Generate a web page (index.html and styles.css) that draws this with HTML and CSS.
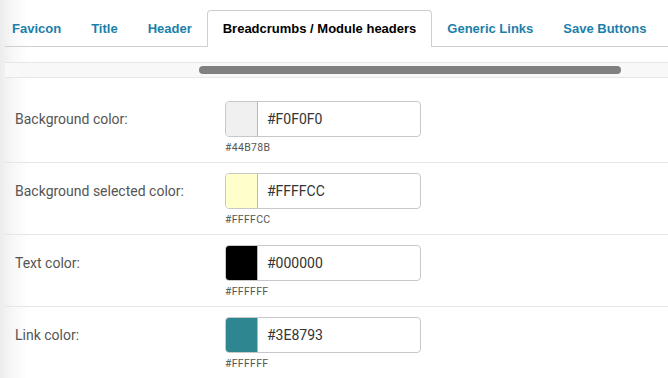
FILE: index.html
```html
<!DOCTYPE html>
<html>
<head>
<meta charset="utf-8">
<link rel="stylesheet" href="styles.css">
</head>
<body>
<div class="page">
  <div class="tabs">
    <div class="tab first">Favicon</div>
    <div class="tab">Title</div>
    <div class="tab">Header</div>
    <div class="tab active">Breadcrumbs / Module headers</div>
    <div class="tab">Generic Links</div>
    <div class="tab">Save Buttons</div>
  </div>
  <div class="track"><div class="thumb"></div></div>
  <div class="rows">
    <div class="row">
      <div class="label">Background color:</div>
      <div class="field">
        <div class="input"><span class="swatch" style="background:#F0F0F0"></span><span class="value">#F0F0F0</span></div>
        <div class="hint">#44B78B</div>
      </div>
    </div>
    <div class="row">
      <div class="label">Background selected color:</div>
      <div class="field">
        <div class="input"><span class="swatch" style="background:#FFFFCC"></span><span class="value">#FFFFCC</span></div>
        <div class="hint">#FFFFCC</div>
      </div>
    </div>
    <div class="row">
      <div class="label">Text color:</div>
      <div class="field">
        <div class="input"><span class="swatch" style="background:#000000"></span><span class="value">#000000</span></div>
        <div class="hint">#FFFFFF</div>
      </div>
    </div>
    <div class="row">
      <div class="label">Link color:</div>
      <div class="field">
        <div class="input"><span class="swatch" style="background:#2E8690"></span><span class="value">#3E8793</span></div>
        <div class="hint">#FFFFFF</div>
      </div>
    </div>
  </div>
</div>
</body>
</html>
```
FILE: styles.css
```css
html, body {
  margin: 0;
  padding: 0;
  background: #fff;
}
.page {
  width: 668px;
  height: 378px;
  overflow: hidden;
  padding-left: 5px;
  box-sizing: border-box;
  background: linear-gradient(to right, #ececec 0, #f7f7f7 12px, #ffffff 28px);
  font-family: Roboto, "Liberation Sans", sans-serif;
}
.tabs {
  display: flex;
  align-items: flex-end;
  height: 46px;
  border-bottom: 1px solid #cfcfcf;
  white-space: nowrap;
}
.tab {
  box-sizing: border-box;
  height: 37px;
  padding: 0 14px;
  border: 1px solid transparent;
  border-bottom: none;
  margin-bottom: -1px;
  font-family: "Liberation Sans", Arial, sans-serif;
  font-weight: bold;
  font-size: 13px;
  line-height: 35px;
  color: #1a80aa;
}
.tab.first {
  padding-left: 6px;
}
.tab.active {
  padding: 0 15px;
  border-color: #cfcfcf;
  border-radius: 4px 4px 0 0;
  background: #fff;
  color: #000;
}
.track {
  margin-top: 15px;
  height: 14px;
  border-top: 1px solid #e6e6e6;
  border-bottom: 1px solid #e6e6e6;
  background: #f8f8f8;
  position: relative;
}
.thumb {
  position: absolute;
  left: 194px;
  top: 3px;
  width: 422px;
  height: 8px;
  border-radius: 4px;
  background: #808080;
}
.rows {
  margin-top: 13px;
}
.row {
  display: flex;
  padding: 10px 0 6px;
  border-bottom: 1px solid #e6e6e6;
}
.label {
  width: 220px;
  padding-left: 10px;
  box-sizing: border-box;
  height: 36px;
  line-height: 36px;
  font-size: 14px;
  color: #555;
}
.field {
  display: flex;
  flex-direction: column;
}
.input {
  box-sizing: border-box;
  width: 196px;
  height: 36px;
  border: 1px solid #c8c8c8;
  border-radius: 4px;
  display: flex;
  overflow: hidden;
}
.swatch {
  width: 31px;
  border-right: 1px solid #b8b8b8;
}
.value {
  padding-left: 9px;
  line-height: 34px;
  font-size: 14px;
  color: #333;
}
.hint {
  margin-top: 3px;
  height: 16px;
  line-height: 16px;
  font-size: 10.5px;
  letter-spacing: 0.3px;
  color: #555;
}
```
